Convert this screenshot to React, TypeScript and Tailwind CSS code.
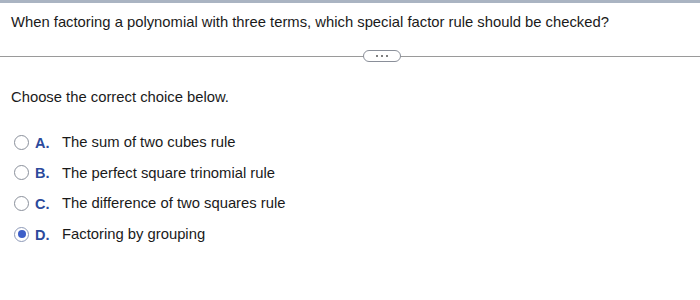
import React from "react";

const options = [
  { letter: "A.", text: "The sum of two cubes rule", checked: false },
  { letter: "B.", text: "The perfect square trinomial rule", checked: false },
  { letter: "C.", text: "The difference of two squares rule", checked: false },
  { letter: "D.", text: "Factoring by grouping", checked: true },
];

export default function App() {
  return (
    <div
      className="w-[700px] h-[300px] bg-white text-[#1a1a1a] overflow-hidden"
      style={{ fontFamily: '"Liberation Sans", Arial, sans-serif' }}
    >
      <div className="h-[3px] bg-[#aab4c2]" />
      <div className="pl-[11px] pt-[10px] text-[14.8px] leading-[18px]">
        When factoring a polynomial with three terms, which special factor rule should be checked?
      </div>
      <div className="relative mt-[19px] h-[12px] flex items-center">
        <div className="w-full h-px bg-[#9a9a9a]" />
        <div className="absolute left-[363px] top-0 w-[38px] h-[12px] rounded-full border border-[#8a8f99] bg-white flex items-center justify-center gap-[3px]">
          <span className="w-[2px] h-[2px] rounded-full bg-[#555]" />
          <span className="w-[2px] h-[2px] rounded-full bg-[#555]" />
          <span className="w-[2px] h-[2px] rounded-full bg-[#555]" />
        </div>
      </div>
      <div className="pl-[11px] mt-[26px] text-[14.8px] leading-[18px]">Choose the correct choice below.</div>
      <div className="mt-[27px] flex flex-col gap-[12.7px]">
        {options.map((o) => (
          <div key={o.letter} className="flex items-center h-[18px]">
            <div
              className={
                "ml-[14px] w-[15px] h-[15px] rounded-full border-[1.5px] flex items-center justify-center " +
                (o.checked ? "border-[#8e9ab8]" : "border-[#8a909b]")
              }
            >
              {o.checked && <div className="w-[8px] h-[8px] rounded-full bg-[#3d5fc8]" />}
            </div>
            <span className="ml-[6px] w-[27px] text-[14.5px] font-bold text-[#2c4a9c] mt-[3px]">{o.letter}</span>
            <span className="text-[14.8px]">{o.text}</span>
          </div>
        ))}
      </div>
    </div>
  );
}
